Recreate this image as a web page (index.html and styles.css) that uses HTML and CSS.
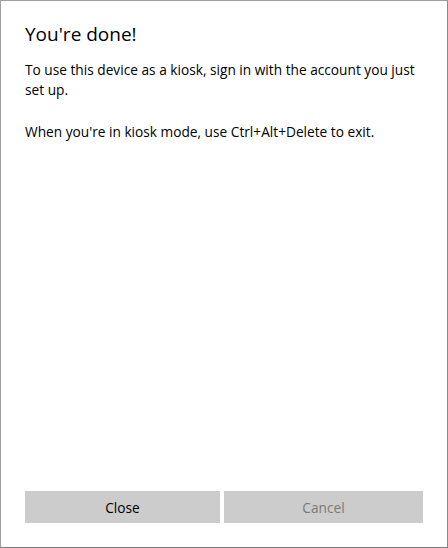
FILE: index.html
```html
<!DOCTYPE html>
<html>
<head>
<meta charset="utf-8">
<link rel="stylesheet" href="styles.css">
</head>
<body>
<div class="dialog">
  <div class="content">
    <h1 class="title">You're done!</h1>
    <p class="text">To use this device as a kiosk, sign in with the account you just set up.</p>
    <p class="text">When you're in kiosk mode, use Ctrl+Alt+Delete to exit.</p>
  </div>
  <div class="footer">
    <button class="btn">Close</button>
    <button class="btn btn-disabled">Cancel</button>
  </div>
</div>
</body>
</html>
```
FILE: styles.css
```css
html, body {
  margin: 0;
  padding: 0;
  background: #ffffff;
}
.dialog {
  width: 448px;
  height: 548px;
  box-sizing: border-box;
  border-top: 1px solid #a0a0a0;
  border-left: 1px solid #a0a0a0;
  border-right: 1px solid #8a8a8a;
  border-bottom: 1px solid #7a7a7a;
  display: flex;
  flex-direction: column;
  font-family: "Open Sans", "Noto Sans", sans-serif;
  color: #000;
}
.content {
  flex: 1;
  padding: 20px 24px 0 24px;
}
.title {
  margin: 0 0 12px 0;
  font-size: 19px;
  font-weight: 400;
  line-height: 27px;
}
.text {
  margin: 0 0 22px 0;
  font-size: 13.7px;
  line-height: 20px;
}
.footer {
  display: grid;
  grid-template-columns: 195px 1fr;
  gap: 4px;
  padding: 0 24px 24px 24px;
}
.btn {
  height: 32px;
  border: none;
  background: #cccccc;
  font-family: "Open Sans", "Noto Sans", sans-serif;
  font-size: 13.7px;
  color: #000;
  padding: 0;
}
.btn-disabled {
  color: #7a7a7a;
}
```
